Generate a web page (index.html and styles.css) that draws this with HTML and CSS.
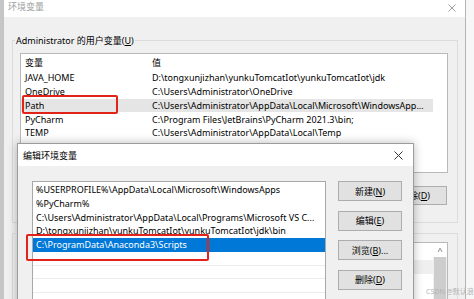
FILE: index.html
```html
<!DOCTYPE html>
<html lang="zh-CN">
<head>
    <meta charset="UTF-8">
    <title>环境变量</title>
    <link rel="stylesheet" href="styles.css">
</head>
<body>

    <div class="desk">
        <div class="win">
            <div class="titlebar">
                <span class="title">环境变量</span>
                <svg class="close" width="8" height="8" viewBox="0 0 8 8"><path d="M0.5 0.5L7.5 7.5M7.5 0.5L0.5 7.5" stroke="#9a9a9a" stroke-width="1" fill="none"/></svg>
            </div>
            <div class="win-body">
                <fieldset class="group">
                    <legend>Administrator 的用户变量(<u>U</u>)</legend>
                    <div class="lv user-lv">
                        <div class="lv-head"><span class="c1">变量</span><span class="c2">值</span></div>
                        <div class="lv-row"><span class="c1">JAVA_HOME</span><span class="c2">D:\tongxunjizhan\yunkuTomcatIot\yunkuTomcatIot\jdk</span></div>
                        <div class="lv-row"><span class="c1">OneDrive</span><span class="c2">C:\Users\Administrator\OneDrive</span></div>
                        <div class="lv-row hover"><span class="c1">Path</span><span class="c2">C:\Users\Administrator\AppData\Local\Microsoft\WindowsApp...</span></div>
                        <div class="lv-row"><span class="c1">PyCharm</span><span class="c2">C:\Program Files\JetBrains\PyCharm 2021.3\bin;</span></div>
                        <div class="lv-row"><span class="c1">TEMP</span><span class="c2">C:\Users\Administrator\AppData\Local\Temp</span></div>
                    </div>
                    <!-- only the last button shows past the edit dialog -->
                    <div class="btn-row">
                        <button class="btn">删除(<u>D</u>)</button>
                    </div>
                </fieldset>

                <fieldset class="group sys">
                    <legend></legend>
                    <div class="lv sys-lv">
                        <div class="lv-main">
                            <div class="lv-head"></div>
                            <div class="lv-row shaded"></div>
                            <div class="lv-row"></div>
                        </div>
                        <div class="vscroll">
                            <div class="arrow">^</div>
                            <div class="thumb"></div>
                        </div>
                    </div>
                </fieldset>
            </div>
        </div>

        <div class="mark-box mark-path"></div>

        <div class="edit-dlg">
            <div class="dlg-title">
                <span>编辑环境变量</span>
                <svg class="close" width="9" height="9" viewBox="0 0 9 9"><path d="M0.5 0.5L8.5 8.5M8.5 0.5L0.5 8.5" stroke="#333" stroke-width="1" fill="none"/></svg>
            </div>
            <div class="dlg-body">
                <div class="path-list">
                    <div class="p-row">%USERPROFILE%\AppData\Local\Microsoft\WindowsApps</div>
                    <div class="p-row">%PyCharm%</div>
                    <div class="p-row">C:\Users\Administrator\AppData\Local\Programs\Microsoft VS C...</div>
                    <div class="p-row">D:\tongxunjizhan\yunkuTomcatIot\yunkuTomcatIot\jdk\bin</div>
                    <div class="p-row selected">C:\ProgramData\Anaconda3\Scripts</div>
                    <div class="p-row empty"></div>
                    <div class="p-row empty"></div>
                    <div class="p-row empty"></div>
                </div>
                <div class="btn-col">
                    <button class="btn">新建(<u>N</u>)</button>
                    <button class="btn">编辑(<u>E</u>)</button>
                    <button class="btn">浏览(<u>B</u>)...</button>
                    <button class="btn">删除(<u>D</u>)</button>
                </div>
            </div>
        </div>

        <div class="mark-box mark-sel"></div>

        <div class="watermark">CSDN @默认浪</div>
    </div>

</body>
</html>
```

FILE: styles.css
```css
* {
    margin: 0;
    padding: 0;
    box-sizing: border-box;
}

body {
    width: 474px;
    height: 299px;
    overflow: hidden;
    background: linear-gradient(to right, #c6c6c6 0 3px, #f7f7f7 3px);
    font-family: "Noto Sans", "Noto Sans CJK SC", sans-serif;
    font-size: 9px;
    color: #000;
}

.desk {
    position: relative;
    height: 299px;
    overflow: hidden;
}

/* outer window */
.win {
    margin-left: 3px;
    width: 463px;
    height: 299px;
    overflow: hidden;
    background: #f0f0f0;
    border-left: 1px solid #c4c4c4;
    border-right: 1px solid #b4b4b4;
}

.titlebar {
    height: 17px;
    background: #fff;
    display: flex;
    justify-content: space-between;
    align-items: flex-start;
    padding: 1px 9px 0 4px;
    color: #a0a0a0;
    line-height: 11px;
}

.titlebar .close {
    margin-top: 3px;
}

.win-body {
    padding: 18px 7px 0 8px;
}

.group {
    border: 1px solid #dcdcdc;
    padding: 0 9px 17px 7px;
}

.group legend {
    margin-left: -5px;
    padding: 0 1px;
    line-height: 11px;
}

.group.sys {
    margin-top: 5px;
}

.group.sys legend {
    width: 60px;
    height: 11px;
}

.lv {
    background: #fff;
    border: 1px solid #b9b9b9;
    overflow: hidden;
}

.user-lv {
    margin-top: 7px;
    height: 120px;
    padding-right: 14px;
}

.lv-head {
    height: 17px;
    display: flex;
    align-items: center;
}

.lv-row {
    height: 13.75px;
    display: flex;
    align-items: center;
    white-space: nowrap;
}

.c1 {
    width: 127px;
    padding-left: 4px;
    flex-shrink: 0;
}

.c2 {
    padding-left: 4px;
}

.lv-row.hover {
    background: #e5e5e5;
}

.lv-row.shaded {
    background: #efefef;
}

.btn-row {
    margin-top: 13px;
    display: flex;
    justify-content: flex-end;
    padding-right: 1px;
}

.btn {
    width: 64px;
    height: 19px;
    background: #e1e1e1;
    border: 1px solid #adadad;
    font-family: inherit;
    font-size: 9px;
    color: #000;
}

.sys-lv {
    margin-top: 3px;
    height: 80px;
    display: flex;
}

.lv-main {
    flex: 1;
}

.vscroll {
    width: 14px;
    background: #f0f0f0;
    display: flex;
    flex-direction: column;
}

.vscroll .arrow {
    height: 14px;
    background: #fff;
    color: #606060;
    text-align: center;
    line-height: 16px;
    font-size: 9px;
}

.vscroll .thumb {
    flex: 1;
    margin: 0 1px;
    background: #cdcdcd;
}

/* edit dialog */
.edit-dlg {
    position: absolute;
    left: 17px;
    top: 143px;
    width: 397px;
    height: 180px;
    background: #f0f0f0;
    border: 1px solid #9c9c9c;
    box-shadow: 0 0 9px rgba(0, 0, 0, 0.28);
}

.dlg-title {
    height: 22px;
    background: #fff;
    display: flex;
    justify-content: space-between;
    align-items: center;
    padding: 0 10px 0 5px;
}

.dlg-body {
    display: flex;
    padding: 15px 0 0 14px;
}

.path-list {
    width: 294px;
    height: 140px;
    background: #fff;
    border: 1px solid #a8a8a8;
    padding-top: 1px;
}

.p-row {
    height: 13.75px;
    line-height: 13.75px;
    padding-left: 3px;
    white-space: nowrap;
    overflow: hidden;
}

.p-row.selected {
    background: #0078d7;
    color: #fff;
}

.p-row.empty {
    border-bottom: 1px solid #ececec;
}

.btn-col {
    margin-left: 12px;
    display: flex;
    flex-direction: column;
    gap: 9.5px;
}

.btn-col .btn {
    height: 20px;
}

/* red annotation boxes */
.mark-box {
    position: absolute;
    border: 2px solid #e2231a;
    border-radius: 2px;
}

.mark-path {
    left: 22px;
    top: 95px;
    width: 96px;
    height: 19px;
}

.mark-sel {
    left: 26px;
    top: 234px;
    width: 183px;
    height: 27px;
}

.watermark {
    position: absolute;
    left: 426px;
    top: 286px;
    font-size: 7px;
    color: #b4b4b4;
    white-space: nowrap;
}
```
